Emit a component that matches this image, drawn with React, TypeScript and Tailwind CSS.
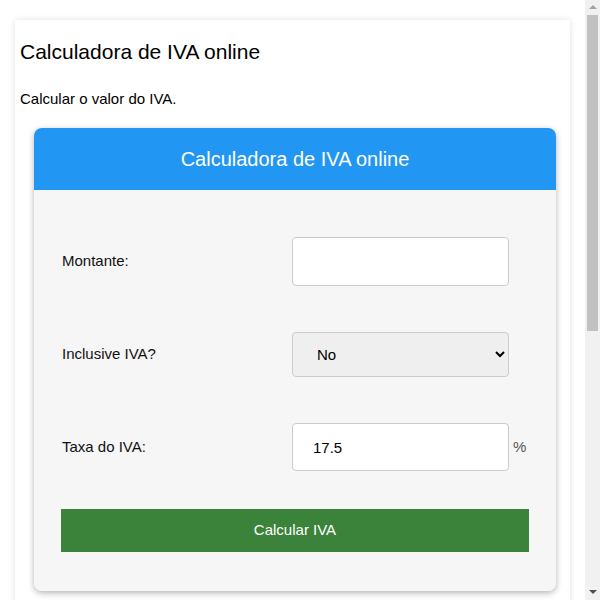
function Scrollbar() {
  // stand-in for the browser's vertical scrollbar
  return (
    <div className="fixed top-0 right-0 flex h-[600px] w-[15px] flex-col items-center bg-[#f1f1f1]">
      <div className="mt-[5px] h-0 w-0 border-x-[4px] border-b-[4px] border-x-transparent border-b-[#a3a3a3]" />
      <div className="mt-[6px] h-[316px] w-[11px] bg-[#c1c1c1]" />
      <div className="mt-auto mb-[6px] h-0 w-0 border-x-[4px] border-t-[4px] border-x-transparent border-t-[#505050]" />
    </div>
  );
}

export default function App() {
  return (
    <div
      className="mr-[15px] min-h-[700px] bg-white pt-[20px] pb-[40px]"
      style={{ fontFamily: '"Liberation Sans", Arial, sans-serif' }}
    >
      <div className="mx-[15px] bg-white px-[5px] pt-[19px] pb-[60px] shadow-[0_0_6px_rgba(0,0,0,0.12)]">
        <h1 className="text-[21px] leading-[25px] text-black">
          Calculadora de IVA online
        </h1>
        <p className="mt-[26px] text-[15px] leading-[18px] text-black">
          Calcular o valor do IVA.
        </p>

        <div className="mt-[20px] ml-[14px] w-[522px] overflow-hidden rounded-[8px] shadow-[0_2px_6px_rgba(0,0,0,0.3)]">
          <div className="flex h-[62px] items-center justify-center bg-[#2196f3] text-[20px] text-white">
            Calculadora de IVA online
          </div>

          <div className="flex flex-col bg-[#f6f6f6] px-[27px] pt-[47px] pb-[39px] text-[15px] text-[#111]">
            <div className="flex h-[49px] items-center">
              <label className="w-[231px] pl-[1px]">Montante:</label>
              <input
                type="text"
                className="h-[49px] w-[217px] rounded-[4px] border border-[#ccc] bg-white pl-[20px] text-[15px] text-black outline-none"
              />
            </div>

            <div className="mt-[46px] flex h-[45px] items-center">
              <label className="w-[231px] pl-[1px]">Inclusive IVA?</label>
              <select
                defaultValue="No"
                className="h-[45px] w-[217px] rounded-[4px] border border-[#ccc] bg-[#efefef] pl-[20px] text-[15px] text-black"
              >
                <option>No</option>
                <option>Sim</option>
              </select>
            </div>

            <div className="mt-[46px] flex h-[48px] items-center">
              <label className="w-[231px] pl-[1px]">Taxa do IVA:</label>
              <input
                type="text"
                defaultValue="17.5"
                className="h-[48px] w-[217px] rounded-[4px] border border-[#ccc] bg-white pl-[20px] text-[15px] text-black outline-none"
              />
              <span className="ml-[4px] text-[#555]">%</span>
            </div>

            <button className="mt-[38px] h-[43px] w-full bg-[#3b833a] text-[15px] text-white">
              Calcular IVA
            </button>
          </div>
        </div>
      </div>
      <Scrollbar />
    </div>
  );
}
